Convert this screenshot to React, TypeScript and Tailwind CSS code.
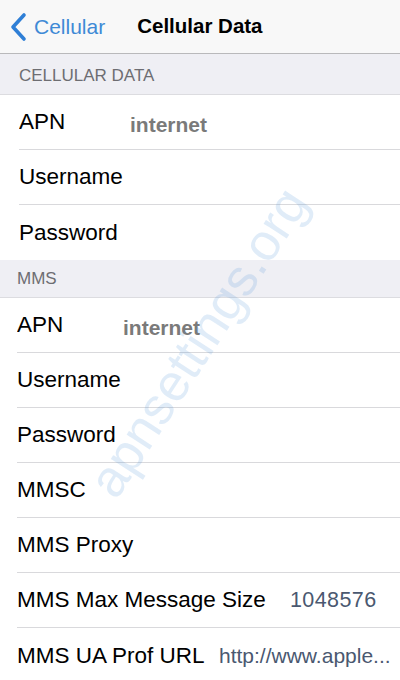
import React from "react";

const font = { fontFamily: '"Liberation Sans", Arial, Helvetica, sans-serif' };

function Row({
  label,
  value,
  valueKind,
  pad,
  labelW,
  last,
}: {
  label: string;
  value?: string;
  valueKind?: "gray" | "blue" | "url";
  pad: string;
  labelW?: string;
  last?: boolean;
}) {
  return (
    <div className={`${pad} bg-white`}>
      <div
        className={`h-[55px] flex items-center overflow-hidden ${last ? "" : "border-b border-[#d9d9dc]"}`}
      >
        <span className={`shrink-0 text-[22.5px] text-black whitespace-nowrap ${labelW ?? ""}`}>{label}</span>
        {value && valueKind === "gray" && (
          <span className="shrink-0 text-[21px] font-bold text-[#7a7a7a] mt-[5px] whitespace-nowrap">{value}</span>
        )}
        {value && valueKind === "blue" && (
          <span className="shrink-0 text-[21.5px] tracking-[0.4px] text-[#4a5870] whitespace-nowrap">{value}</span>
        )}
        {value && valueKind === "url" && (
          <span className="shrink-0 text-[21px] text-[#4a5870] whitespace-nowrap">{value}</span>
        )}
      </div>
    </div>
  );
}

export default function App() {
  return (
    <div className="relative w-[400px] h-[680px] overflow-hidden bg-[#efeff4]" style={font}>
      <div className="h-[54px] bg-[#f8f8f8] border-b border-[#b9b9bb] flex items-center">
        <svg width="20" height="30" viewBox="0 0 20 30" className="ml-[8px]">
          <path d="M16 3 L5 15 L16 27" fill="none" stroke="#2f7fd6" strokeWidth="3.6" strokeLinecap="round" strokeLinejoin="round" />
        </svg>
        <span className="ml-[6px] text-[21px] text-[#3f8ad6]">Cellular</span>
        <span className="ml-[32px] text-[20.5px] font-bold text-black">Cellular Data</span>
      </div>
      <div className="h-[41px] flex items-end pb-[6px] pl-[19px] border-b border-[#dcdce0]">
        <span className="text-[17px] text-[#6d6d72]">CELLULAR DATA</span>
      </div>
      <Row pad="pl-[19px]" label="APN" labelW="w-[111px]" value="internet" valueKind="gray" />
      <Row pad="pl-[19px]" label="Username" />
      <Row pad="pl-[19px]" label="Password" last />
      <div className="h-[38px] flex items-center pl-[17px] border-b border-[#dcdce0]">
        <span className="text-[17px] text-[#6d6d72]">MMS</span>
      </div>
      <Row pad="pl-[17px]" label="APN" labelW="w-[106px]" value="internet" valueKind="gray" />
      <Row pad="pl-[17px]" label="Username" />
      <Row pad="pl-[17px]" label="Password" />
      <Row pad="pl-[17px]" label="MMSC" />
      <Row pad="pl-[17px]" label="MMS Proxy" />
      <Row pad="pl-[17px]" label="MMS Max Message Size" labelW="w-[273px]" value="1048576" valueKind="blue" />
      <Row pad="pl-[17px]" label="MMS UA Prof URL" labelW="w-[202px]" value="http://www.apple..." valueKind="url" last />
      <div className="pointer-events-none absolute left-[198px] top-[342px] -translate-x-1/2 -translate-y-1/2 -rotate-[57deg] whitespace-nowrap text-[52px] text-[rgba(70,140,215,0.17)]">
        apnsettings.org
      </div>
    </div>
  );
}
